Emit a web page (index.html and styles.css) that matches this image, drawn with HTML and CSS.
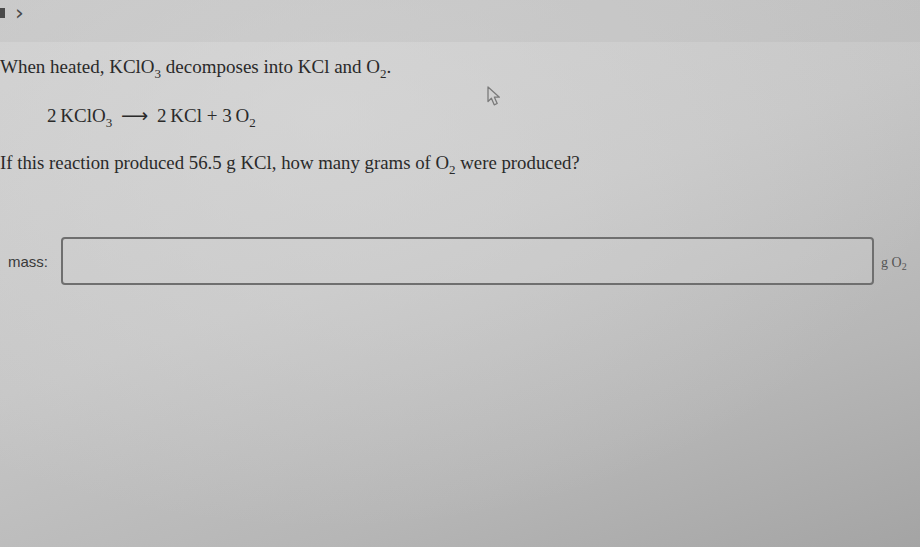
FILE: index.html
```html
<!DOCTYPE html>
<html>
<head>
<meta charset="utf-8">
<link rel="stylesheet" href="styles.css">
</head>
<body>
<div class="screen">
  <div class="topbar">
    <span class="dot"></span>
    <span class="chev">&#8250;</span>
  </div>
  <div class="content">
    <p class="line first">When heated, KClO<sub>3</sub> decomposes into KCl and O<sub>2</sub>.</p>
    <div class="eqrow">
      <p class="eq">2&thinsp;KClO<sub>3</sub> <span class="arrow">&#10230;</span> 2&thinsp;KCl + 3&thinsp;O<sub>2</sub></p>
      <svg class="cursor" width="18" height="22" viewBox="0 0 18 22"><path d="M2 1 L2 15.5 L5.4 12.3 L8.2 18.8 L11.2 17.5 L8.4 11.2 L13.4 11.2 Z" fill="none" stroke="#7a7a7a" stroke-width="1.3" stroke-linejoin="round"/></svg>
    </div>
    <p class="line q">If this reaction produced 56.5 g KCl, how many grams of O<sub>2</sub> were produced?</p>
    <div class="answer">
      <span class="label">mass:</span>
      <div class="box"></div>
      <span class="unit">g O<sub>2</sub></span>
    </div>
  </div>
</div>
</body>
</html>
```
FILE: styles.css
```css
html, body {
  margin: 0;
  padding: 0;
  width: 920px;
  height: 547px;
  overflow: hidden;
}
.screen {
  width: 920px;
  height: 547px;
  background:
    radial-gradient(ellipse 900px 600px at 35% 20%, rgba(220,220,220,0.55), rgba(220,220,220,0) 70%),
    linear-gradient(160deg, #cfcfcf 0%, #c6c6c6 45%, #b6b6b6 75%, #a4a4a4 100%);
  color: #2a2a2a;
  font-family: "Liberation Serif", "Times New Roman", serif;
}
.topbar {
  height: 42px;
  background: rgba(150,150,150,0.12);
  display: flex;
  align-items: flex-start;
  gap: 10px;
  padding-top: 2px;
  box-sizing: border-box;
}
.dot {
  width: 5px;
  height: 10px;
  background: #4a4a4a;
  margin-top: 6px;
}
.chev {
  font-family: "DejaVu Sans", sans-serif;
  font-size: 22px;
  line-height: 22px;
  color: #4a4a4a;
}
.content {
  padding-top: 12px;
}
.line {
  margin: 0;
  font-size: 19px;
  line-height: 26px;
  white-space: nowrap;
}
sub {
  font-size: 13px;
  vertical-align: -5px;
  line-height: 0;
}
.eqrow {
  display: flex;
  align-items: flex-start;
  margin-top: 22px;
  padding-left: 47px;
}
.eq {
  margin: 0;
  font-size: 19px;
  line-height: 26px;
  white-space: nowrap;
}
.arrow {
  font-family: "DejaVu Sans", sans-serif;
  font-size: 19px;
  margin: 0 4px;
}
.cursor {
  margin-left: 230px;
  margin-top: -16px;
}
.q {
  margin-top: 21px;
  font-size: 18.8px;
}
.answer {
  display: flex;
  align-items: center;
  margin-top: 61px;
  padding-left: 8px;
}
.label {
  font-family: "Liberation Sans", Arial, sans-serif;
  font-size: 15px;
  color: #3a3a3a;
  width: 53px;
}
.box {
  width: 809px;
  height: 44px;
  border: 2px solid #6f6f6f;
  border-radius: 4px;
  background: rgba(205,205,205,0.35);
}
.unit {
  margin-left: 7px;
  font-size: 14px;
  color: #555;
  margin-top: 4px;
}
.unit sub {
  font-size: 10px;
  vertical-align: -3px;
}
```
